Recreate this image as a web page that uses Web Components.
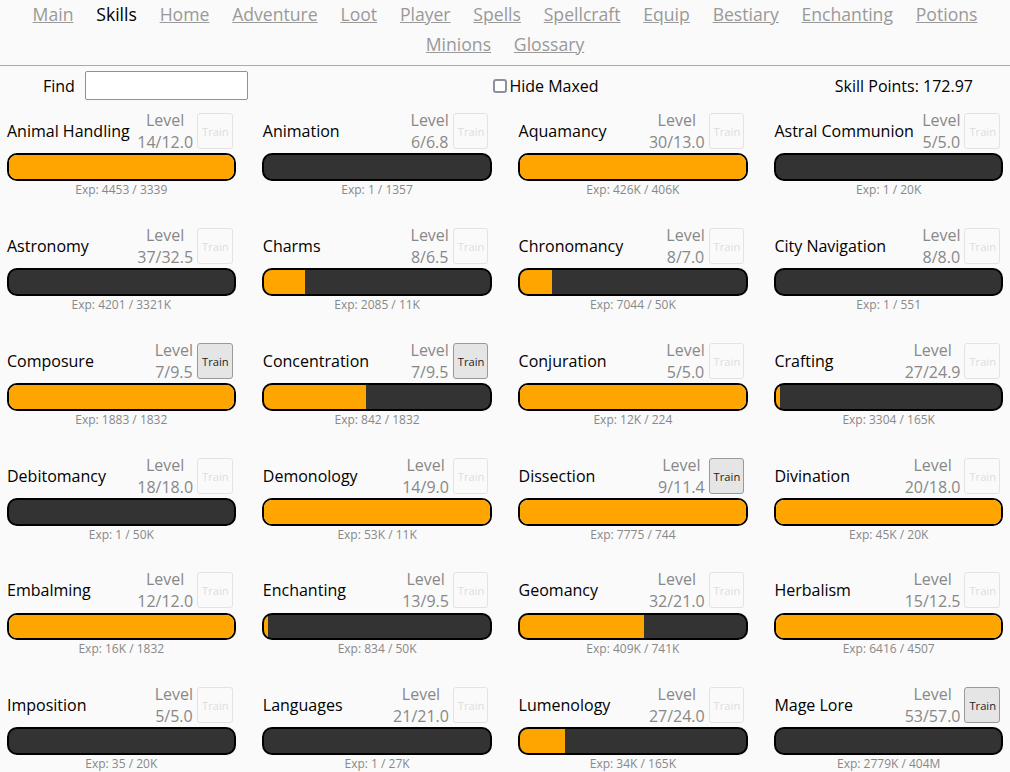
<!DOCTYPE html>
<html>
<head>
<meta charset="utf-8">
<style>
    html, body { margin: 0; padding: 0; height: 772px; overflow: hidden; background: #fafafa; }
    body { font-family: "Open Sans", sans-serif; color: #000; }
</style>
</head>
<body>
<game-nav></game-nav>
<skills-bar></skills-bar>
<skill-list></skill-list>
<script>
const navNames = ['Main', 'Skills', 'Home', 'Adventure', 'Loot', 'Player', 'Spells', 'Spellcraft', 'Equip', 'Bestiary', 'Enchanting', 'Potions', 'Minions', 'Glossary'];

// name, level, fill percent, exp text, trainable
const skills = [
    ['Animal Handling', '14/12.0', 100, 'Exp: 4453 / 3339', 0],
    ['Animation', '6/6.8', 0, 'Exp: 1 / 1357', 0],
    ['Aquamancy', '30/13.0', 100, 'Exp: 426K / 406K', 0],
    ['Astral Communion', '5/5.0', 0, 'Exp: 1 / 20K', 0],
    ['Astronomy', '37/32.5', 0, 'Exp: 4201 / 3321K', 0],
    ['Charms', '8/6.5', 18, 'Exp: 2085 / 11K', 0],
    ['Chronomancy', '8/7.0', 14, 'Exp: 7044 / 50K', 0],
    ['City Navigation', '8/8.0', 0, 'Exp: 1 / 551', 0],
    ['Composure', '7/9.5', 100, 'Exp: 1883 / 1832', 1],
    ['Concentration', '7/9.5', 45, 'Exp: 842 / 1832', 1],
    ['Conjuration', '5/5.0', 100, 'Exp: 12K / 224', 0],
    ['Crafting', '27/24.9', 1.7, 'Exp: 3304 / 165K', 0],
    ['Debitomancy', '18/18.0', 0, 'Exp: 1 / 50K', 0],
    ['Demonology', '14/9.0', 100, 'Exp: 53K / 11K', 0],
    ['Dissection', '9/11.4', 100, 'Exp: 7775 / 744', 1],
    ['Divination', '20/18.0', 100, 'Exp: 45K / 20K', 0],
    ['Embalming', '12/12.0', 100, 'Exp: 16K / 1832', 0],
    ['Enchanting', '13/9.5', 1.7, 'Exp: 834 / 50K', 0],
    ['Geomancy', '32/21.0', 55, 'Exp: 409K / 741K', 0],
    ['Herbalism', '15/12.5', 100, 'Exp: 6416 / 4507', 0],
    ['Imposition', '5/5.0', 0, 'Exp: 35 / 20K', 0],
    ['Languages', '21/21.0', 0, 'Exp: 1 / 27K', 0],
    ['Lumenology', '27/24.0', 20, 'Exp: 34K / 165K', 0],
    ['Mage Lore', '53/57.0', 0, 'Exp: 2779K / 404M', 1],
];

class GameNav extends HTMLElement {
    constructor() {
        super()
        this.attachShadow({ mode: 'open' })
        const links = navNames.map(n => `<a class="${n == 'Skills' ? 'active' : ''}">${n}</a>`).join('');
        this.shadowRoot.innerHTML = `
        <style>
            :host{
                display:flex;
                flex-wrap:wrap;
                justify-content:center;
                align-content:flex-start;
                column-gap:22.8px;
                padding:0 16px;
                height:65px;
                box-sizing:content-box;
                border-bottom:1px solid #aaa;
                font-size:17.6px;
                line-height:29.6px;
            }
            a{
                color:#999;
                text-decoration:underline;
            }
            .active{
                color:#000;
                text-decoration:none;
            }
        </style>
        ${links}`;
    }
}

class SkillsBar extends HTMLElement {
    constructor() {
        super()
        this.attachShadow({ mode: 'open' })
        this.shadowRoot.innerHTML = `
        <style>
            :host{
                display:grid;
                grid-template-columns:1fr 1fr 1fr;
                align-items:center;
                height:40px;
                font-size:16px;
            }
            .find{
                display:flex;
                align-items:center;
                gap:10px;
                padding-left:43px;
            }
            input[type=text]{
                width:163px;
                height:29px;
                box-sizing:border-box;
                border:1px solid #8f8f9d;
                border-radius:2px;
                background:#fff;
                margin:0 0 1px;
            }
            .hide{
                display:flex;
                align-items:center;
                justify-content:center;
                padding-left:82px;
            }
            .box{
                width:14px;
                height:14px;
                box-sizing:border-box;
                border:2px solid #8f8f9d;
                border-radius:3px;
                background:#fff;
                margin-right:2px;
            }
            .points{
                text-align:right;
                padding-right:37px;
            }
        </style>
        <div class="find"><span>Find</span><input type="text"></div>
        <div class="hide"><span class="box"></span><span>Hide Maxed</span></div>
        <div class="points">Skill Points: 172.97</div>`;
    }
}

class SkillRow extends HTMLElement {
    constructor() {
        super()
        this.attachShadow({ mode: 'open' })
        this.shadowRoot.innerHTML = `
        <style>
            :host{
                display:block;
                width:229.6px;
                color:#000;
            }
            .top{
                display:flex;
                align-items:center;
                height:40px;
                font-size:16px;
            }
            .name{
                flex:1;
                padding-left:.5px;
                white-space:nowrap;
            }
            .level{
                color:#888;
                font-size:16px;
                line-height:22px;
                text-align:center;
                margin-right:4px;
            }
            button{
                width:35.5px;
                height:36px;
                box-sizing:border-box;
                padding:1px 0 0 1px;
                margin:0 3.5px 0 0;
                border:1px solid #e3e3e3;
                border-radius:3px;
                background:transparent;
                color:#ddd;
                font:11.2px "Open Sans", sans-serif;
                flex:none;
            }
            button.on{
                border-color:#999;
                background:#e6e5e5;
                color:#222;
            }
            .bar{
                height:27.8px;
                box-sizing:border-box;
                margin-top:2.2px;
                border:2px solid #000;
                border-radius:10px;
                background:#333;
                overflow:hidden;
            }
            .fill{
                height:100%;
                background:#ffa500;
            }
            .exp{
                color:#888;
                font-size:12px;
                line-height:18px;
                text-align:center;
            }
        </style>
        <div class="top">
            <div class="name" id="name"></div>
            <div class="level">Level<br><span id="level"></span></div>
            <button id="train">Train</button>
        </div>
        <div class="bar"><div class="fill" id="fill"></div></div>
        <div class="exp" id="exp"></div>`;
    }

    set skill(s) {
        const $ = id => this.shadowRoot.getElementById(id);
        $('name').textContent = s[0];
        $('level').textContent = s[1];
        $('fill').style.width = s[2] + '%';
        $('exp').textContent = s[3];
        if (s[4]) $('train').className = 'on';
    }
}

class SkillList extends HTMLElement {
    constructor() {
        super()
        this.attachShadow({ mode: 'open' })
        this.shadowRoot.innerHTML = `
        <style>
            :host{
                display:grid;
                grid-template-columns:repeat(4, 255.8px);
                grid-auto-rows:114.8px;
                padding:5.2px 0 0 6.5px;
            }
        </style>`;
    }

    connectedCallback() {
        skills.forEach(s => {
            const row = document.createElement('skill-row');
            row.skill = s;
            this.shadowRoot.appendChild(row);
        });
    }
}

customElements.define('game-nav', GameNav);
customElements.define('skills-bar', SkillsBar);
customElements.define('skill-row', SkillRow);
customElements.define('skill-list', SkillList);
</script>
</body>
</html>
